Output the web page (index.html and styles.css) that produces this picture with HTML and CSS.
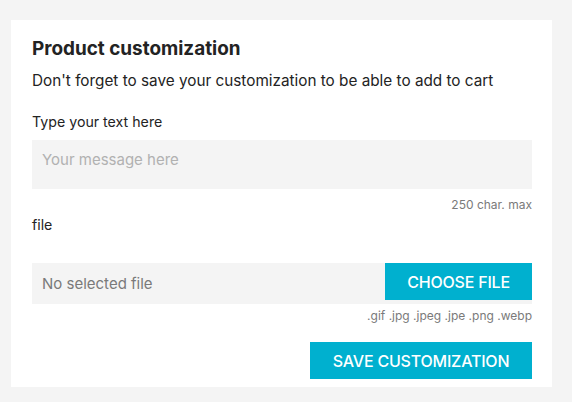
FILE: index.html
```html
<!DOCTYPE html>
<html lang="en">
<head>
    <meta charset="UTF-8">
    <meta name="viewport" content="width=device-width, initial-scale=1.0">
    <title>Product customization</title>

    <link rel="stylesheet" href="styles.css">
</head>
<body>
    <section class="customization">
        <h3 class="title">Product customization</h3>
        <p class="subtitle">Don't forget to save your customization to be able to add to cart</p>

        <form class="custom-form">
            <label class="field-label" for="text-field">Type your text here</label>
            <textarea id="text-field" placeholder="Your message here" maxlength="250"></textarea>
            <small class="hint">250 char. max</small>

            <label class="field-label file-label">file</label>
            <div class="file-input">
                <span class="file-name">No selected file</span>
                <button type="button" class="btn">Choose file</button>
            </div>
            <small class="hint hint-file">.gif .jpg .jpeg .jpe .png .webp</small>

            <div class="actions">
                <button type="submit" class="btn btn-save">Save customization</button>
            </div>
        </form>
    </section>
</body>
</html>
```

FILE: styles.css
```css
* {
    margin: 0;
    padding: 0;
    box-sizing: border-box;
}

body {
    font-family: Inter, "Noto Sans", sans-serif;
    background-color: #f4f4f4;
    color: #232323;
    padding: 20px 20px 0 11px;
}

/* Card */
.customization {
    background-color: #fff;
    padding: 17px 20px 8px 21px;
}

.title {
    font-size: 18.9px;
    line-height: 24px;
    font-weight: 700;
}

.subtitle {
    margin-top: 9px;
    font-size: 15.3px;
    line-height: 22px;
}

/* Form */
.custom-form {
    display: flex;
    flex-direction: column;
}

.field-label {
    margin-top: 20px;
    font-size: 14.2px;
    line-height: 20px;
}

.file-label {
    margin-top: 2px;
}

textarea {
    margin-top: 8px;
    height: 49px;
    border: none;
    resize: none;
    background-color: #f4f4f4;
    padding: 10px 10px;
    font-family: inherit;
    font-size: 15px;
    line-height: 20px;
    color: #232323;
}

textarea::placeholder {
    color: #b1b1b1;
}

.hint {
    align-self: flex-end;
    margin-top: 8px;
    font-size: 12px;
    line-height: 16px;
    color: #7a7a7a;
}

.hint-file {
    margin-top: 4px;
}

.file-input {
    margin-top: 28px;
    display: flex;
    align-items: flex-start;
    height: 41px;
    background-color: #f4f4f4;
}

.file-name {
    flex: 1;
    padding: 0 10px;
    line-height: 41px;
    font-size: 15px;
    color: #7a7a7a;
}

.btn {
    border: none;
    background-color: #00b0cf;
    color: #fff;
    font-family: inherit;
    font-size: 16px;
    font-weight: 500;
    text-transform: uppercase;
    letter-spacing: -0.2px;
    height: 37px;
    padding: 0 21px;
    cursor: pointer;
}

.file-input .btn {
    width: 147px;
}

.actions {
    margin-top: 18px;
    display: flex;
    justify-content: flex-end;
}

.btn-save {
    width: 222px;
}
```
